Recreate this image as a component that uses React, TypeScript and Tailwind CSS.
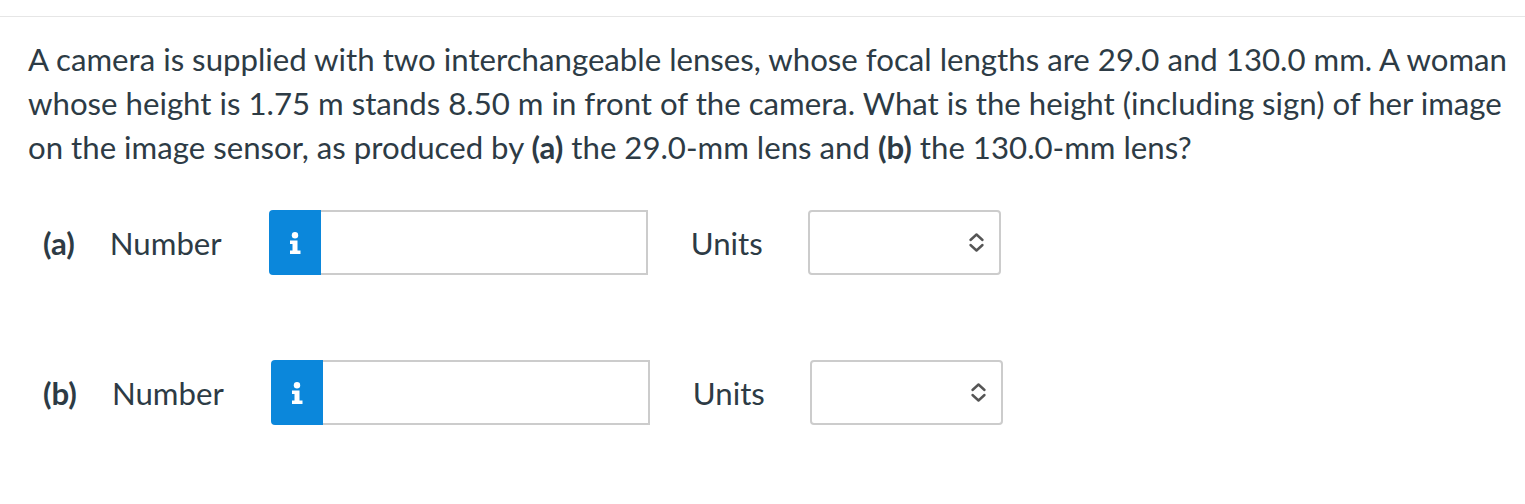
import React from "react";

const TEXT = "#2d3b45";

function InfoIcon() {
  return (
    <svg width="12" height="22" viewBox="0 0 12 22" fill="#fff">
      <circle cx="6" cy="3.2" r="3.2" />
      <path d="M1 8.5H8.5V18.5H11.5V22H1V18.5H3.5V12H1Z" />
    </svg>
  );
}

function Chevrons() {
  return (
    <svg width="17" height="21" viewBox="0 0 17 21" fill="none" stroke="#555" strokeWidth="2.4" strokeLinecap="round" strokeLinejoin="round">
      <path d="M2.5 8L8.5 2.5L14.5 8" />
      <path d="M2.5 13L8.5 18.5L14.5 13" />
    </svg>
  );
}

function AnswerRow({ part }: { part: string }) {
  return (
    <div className="flex items-center pl-[43px]">
      <span className="mr-[35px] font-bold">{part}</span>
      <span className="mr-[47px]">Number</span>
      <div className="flex h-[65px]">
        <button className="flex w-[52px] items-center justify-center rounded-l-[4px] bg-[#0b87db]">
          <InfoIcon />
        </button>
        <input className="w-[327px] border-2 border-l-0 border-[#cccccc] bg-white outline-none" />
      </div>
      <span className="ml-[43px] mr-[45px]">Units</span>
      <div className="flex h-[65px] w-[193px] items-center justify-end rounded-[4px] border-2 border-[#cccccc] pr-[14px]">
        <Chevrons />
      </div>
    </div>
  );
}

export default function App() {
  return (
    <div
      className="min-h-screen bg-white pt-4 text-[31.2px] leading-[44px]"
      style={{ fontFamily: "Lato, 'Liberation Sans', sans-serif", color: TEXT }}
    >
      <div className="border-t border-[#e6e6e6]" />
      <p className="mt-[20px] whitespace-nowrap pl-[28px]">
        A camera is supplied with two interchangeable lenses, whose focal lengths are 29.0 and 130.0 mm. A woman
        <br />
        whose height is 1.75 m stands 8.50 m in front of the camera. What is the height (including sign) of her image
        <br />
        on the image sensor, as produced by <b>(a)</b> the 29.0-mm lens and <b>(b)</b> the 130.0-mm lens?
      </p>
      <div className="mt-[41px] flex flex-col gap-[85px]">
        <AnswerRow part="(a)" />
        <AnswerRow part="(b)" />
      </div>
    </div>
  );
}
